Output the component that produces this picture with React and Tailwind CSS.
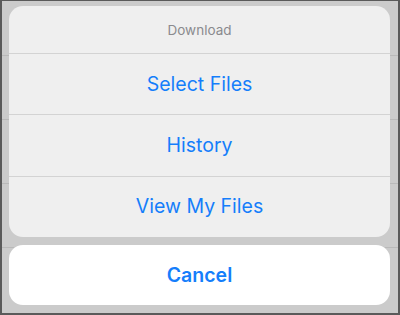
export default function App() {
  const actions = ['Select Files', 'History', 'View My Files'];

  return (
    <div
      className="w-[400px] h-[315px] border-t border-x-2 border-b-2 border-[#5a5a5a] bg-[#cbcbcb] relative overflow-hidden"
      style={{ fontFamily: 'Inter, "Noto Sans", sans-serif' }}
    >
      {/* dimmed list behind the sheet */}
      <div className="flex flex-col pt-[54px]">
        {[0, 1, 2, 3].map((i) => (
          <div key={i} className="h-[64px] border-t border-[#b9b9b9]" />
        ))}
      </div>

      {/* action sheet */}
      <div className="absolute inset-0 pt-[5px] pl-[7px] pr-[8px] flex flex-col gap-[8px]">
        <div className="h-[231px] rounded-[14px] bg-[#efefef] flex flex-col overflow-hidden">
          <div className="h-[47px] pt-[2px] flex items-center justify-center text-[13.5px] text-[#8a8a8e]">
            Download
          </div>
          {actions.map((label) => (
            <div
              key={label}
              className="flex-1 border-t border-[#d3d3d3] flex items-center justify-center text-[19.5px] text-[#157efb]"
            >
              {label}
            </div>
          ))}
        </div>
        <div className="h-[60px] pt-[2px] rounded-[14px] bg-white flex items-center justify-center text-[19.5px] font-semibold text-[#157efb]">
          Cancel
        </div>
      </div>
    </div>
  );
}
